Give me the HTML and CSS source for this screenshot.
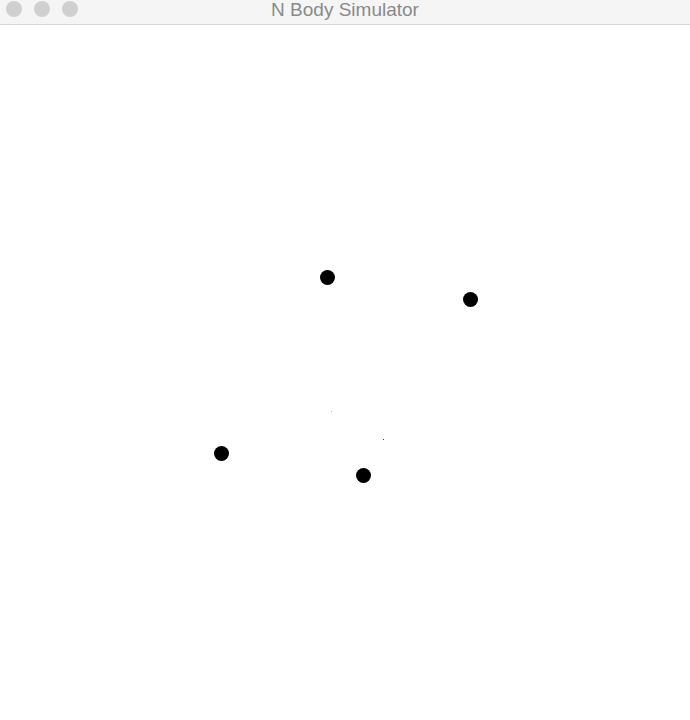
FILE: index.html
```html
<!DOCTYPE html>
<html>
<head>
<meta charset="utf-8">
<title>N Body Simulator</title>
<link rel="stylesheet" href="styles.css">
</head>
<body>
<div class="window">
  <div class="titlebar">
    <div class="lights">
      <span class="light"></span>
      <span class="light"></span>
      <span class="light"></span>
    </div>
    <div class="title">N Body Simulator</div>
  </div>
  <div class="canvas">
    <span class="body b1"></span>
    <span class="body b2"></span>
    <span class="body b3"></span>
    <span class="body b4"></span>
    <span class="speck s1"></span>
    <span class="speck s2"></span>
  </div>
</div>
</body>
</html>
```
FILE: styles.css
```css
html, body {
  margin: 0;
  padding: 0;
  background: #ffffff;
}
.window {
  width: 690px;
  height: 720px;
  display: flex;
  flex-direction: column;
  overflow: hidden;
}
.titlebar {
  position: relative;
  height: 24px;
  background: #f5f5f5;
  border-bottom: 1px solid #d8d8d8;
  display: flex;
  align-items: center;
  justify-content: center;
  flex: none;
}
.lights {
  position: absolute;
  left: 6px;
  top: 1px;
  display: flex;
  gap: 12px;
}
.light {
  width: 16px;
  height: 16px;
  border-radius: 50%;
  background: #d0d0d0;
}
.title {
  font-family: "Liberation Sans", Arial, sans-serif;
  font-size: 19px;
  color: #8a8a8a;
  margin-top: -4px;
}
.canvas {
  position: relative;
  flex: 1;
  background: #ffffff;
}
.body {
  position: absolute;
  width: 15px;
  height: 15px;
  border-radius: 50%;
  background: #000;
}
.b1 { left: 320px; top: 245px; }
.b2 { left: 463px; top: 267px; }
.b3 { left: 214px; top: 421px; }
.b4 { left: 356px; top: 443px; }
.speck {
  position: absolute;
  width: 1px;
  height: 1px;
  background: #777;
}
.s1 { left: 331px; top: 386px; background: #bbb; }
.s2 { left: 383px; top: 414px; background: #444; }
```
